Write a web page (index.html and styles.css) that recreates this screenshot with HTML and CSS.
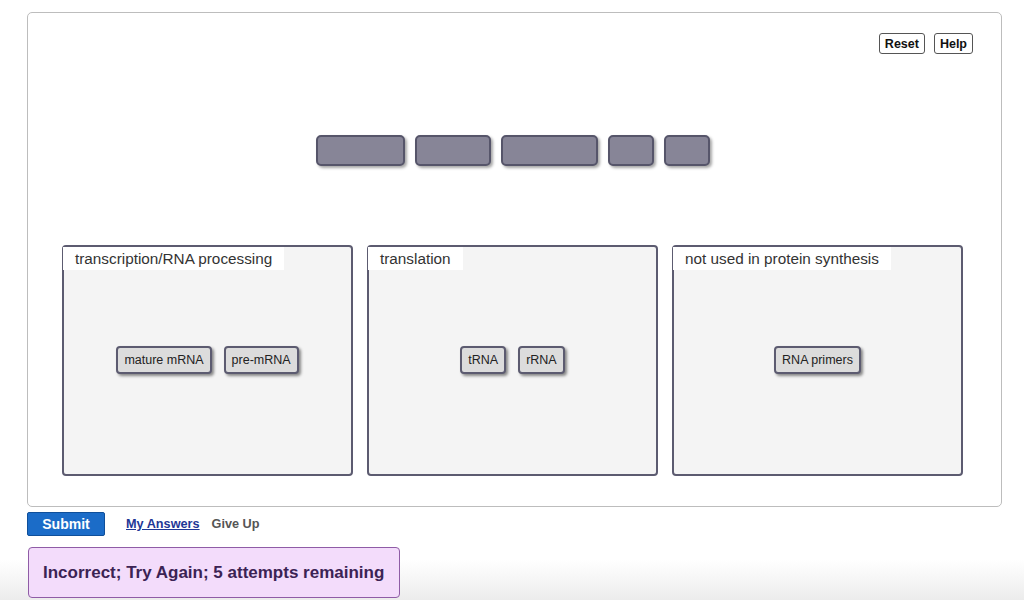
FILE: index.html
```html
<!DOCTYPE html>
<html lang="en">
<head>
    <meta charset="UTF-8">
    <meta name="viewport" content="width=device-width, initial-scale=1.0">
    <title>Drag and drop - RNA</title>
    <link rel="stylesheet" href="styles.css">
</head>
<body>
    <!-- 题目区域 -->
    <div class="panel">
        <div class="tools">
            <button class="tool">Reset</button>
            <button class="tool">Help</button>
        </div>
        <!-- 空白答案槽 -->
        <div class="slots">
            <span class="slot s88"></span>
            <span class="slot s75"></span>
            <span class="slot s96"></span>
            <span class="slot s45"></span>
            <span class="slot s45"></span>
        </div>
        <!-- 分类框 -->
        <div class="bins">
            <div class="bin">
                <div class="bin-label">transcription/RNA processing</div>
                <div class="bin-body">
                    <span class="chip">mature mRNA</span>
                    <span class="chip">pre-mRNA</span>
                </div>
            </div>
            <div class="bin">
                <div class="bin-label">translation</div>
                <div class="bin-body">
                    <span class="chip">tRNA</span>
                    <span class="chip">rRNA</span>
                </div>
            </div>
            <div class="bin">
                <div class="bin-label">not used in protein synthesis</div>
                <div class="bin-body">
                    <span class="chip">RNA primers</span>
                </div>
            </div>
        </div>
    </div>
    <!-- 提交 -->
    <div class="actions">
        <button class="submit">Submit</button>
        <a href="#" class="link">My Answers</a>
        <span class="giveup">Give Up</span>
    </div>
    <div class="feedback">Incorrect; Try Again; 5 attempts remaining</div>
</body>
</html>
```

FILE: styles.css
```css
* {
    margin: 0;
    padding: 0;
    box-sizing: border-box;
}
body {
    font-family: "Liberation Sans", Arial, sans-serif;
    min-height: 600px;
    padding: 12px 0 0 27px;
    background: linear-gradient(to bottom, #fff 0, #fff 560px, #ececec 600px);
    overflow: hidden;
}
.panel {
    width: 975px;
    height: 495px;
    border: 1px solid #bdbdbd;
    border-radius: 5px;
    background: #fff;
    display: flex;
    flex-direction: column;
}
/* 右上角按钮 */
.tools {
    display: flex;
    justify-content: flex-end;
    gap: 9px;
    padding: 20px 28px 0 0;
}
.tool {
    font: bold 12.5px "Liberation Sans", Arial, sans-serif;
    color: #111;
    background: #fff;
    border: 1px solid #555;
    border-radius: 3px;
    height: 21px;
    padding: 0 5px;
}
.slots {
    display: flex;
    justify-content: center;
    gap: 10px;
    margin-top: 81px;
    padding-right: 3px;
}
.slot {
    display: block;
    height: 31px;
    background: #878597;
    border: 2px solid #56556a;
    border-radius: 5px;
    box-shadow: 2px 2px 3px rgba(0, 0, 0, 0.35);
}
.s88 { width: 89px; }
.s75 { width: 76px; }
.s96 { width: 97px; }
.s45 { width: 46px; }
.bins {
    display: flex;
    gap: 14px;
    margin: 79px 0 0 34px;
}
.bin {
    width: 291px;
    height: 231px;
    border: 2px solid #5c5b70;
    border-radius: 4px;
    background: #f4f4f4;
    display: flex;
    flex-direction: column;
    align-items: flex-start;
}
.bin-label {
    background: #fff;
    font-size: 15.3px;
    color: #333;
    height: 23px;
    line-height: 24px;
    padding: 0 12px 0 12px;
    margin-left: -1px;
}
.bin-body {
    flex: 1;
    align-self: stretch;
    display: flex;
    justify-content: center;
    align-items: center;
    gap: 12px;
    padding-bottom: 24px;
}
.chip {
    font-size: 12.5px;
    color: #222;
    background: #dcdcdc;
    border: 2px solid #5c5b70;
    border-radius: 4px;
    height: 28px;
    line-height: 24px;
    padding: 0 6px;
    box-shadow: 2px 2px 3px rgba(0, 0, 0, 0.45);
}
/* 底部 */
.actions {
    display: flex;
    align-items: center;
    margin-top: 5px;
    height: 24px;
}
.submit {
    font: bold 14px "Liberation Sans", Arial, sans-serif;
    color: #fff;
    background: #1b6cc8;
    border: 1px solid #0f4f9a;
    border-radius: 2px;
    width: 78px;
    height: 24px;
    margin-right: 21px;
}
.link {
    font-size: 12.7px;
    font-weight: bold;
    color: #1f3796;
    margin-right: 12px;
}
.giveup {
    font-size: 12.7px;
    font-weight: bold;
    color: #555;
}
.feedback {
    margin: 11px 0 0 1px;
    width: 372px;
    height: 51px;
    background: #f3dcfb;
    border: 1px solid #8f5ca6;
    border-radius: 4px;
    font-size: 17px;
    font-weight: bold;
    color: #3b2354;
    line-height: 49px;
    padding-left: 14px;
}
```
